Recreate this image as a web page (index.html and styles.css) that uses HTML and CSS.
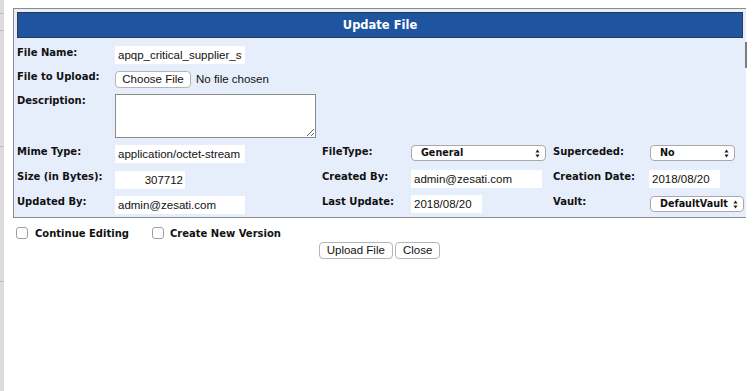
FILE: index.html
```html
<!DOCTYPE html>
<html>
<head>
<meta charset="utf-8">
<title>Update File</title>
<link rel="stylesheet" href="styles.css">
</head>
<body>
<div class="page">
  <div class="edge">
    <div class="edge-line l1"></div>
    <div class="edge-line l2"></div>
    <div class="edge-line l3"></div>
    <div class="edge-line l4"></div>
  </div>
  <div class="dialog">
    <div class="panel">
      <span class="scroll-thumb"></span>
      <div class="title">Update File</div>
      <div class="form">
        <div class="lbl">File Name:</div>
        <div class="val span5"><input class="txt w130" type="text" value="apqp_critical_supplier_status.xlsx"></div>

        <div class="lbl up">File to Upload:</div>
        <div class="val span5 file"><button class="btn choose" type="button">Choose File</button><span class="nofile">No file chosen</span></div>

        <div class="lbl">Description:</div>
        <div class="val span5"><textarea class="desc"></textarea></div>

        <div class="lbl">Mime Type:</div>
        <div class="val"><input class="txt w130" type="text" value="application/octet-stream"></div>
        <div class="lbl">FileType:</div>
        <div class="val"><select class="sel w135 down"><option>General</option></select></div>
        <div class="lbl">Superceded:</div>
        <div class="val"><select class="sel w85 down"><option>No</option></select></div>

        <div class="lbl up">Size (in Bytes):</div>
        <div class="val"><input class="txt w70 right" type="text" value="307712"></div>
        <div class="lbl up">Created By:</div>
        <div class="val"><input class="txt w131 up1" type="text" value="admin@zesati.com"></div>
        <div class="lbl up">Creation Date:</div>
        <div class="val"><input class="txt w71 shift up1" type="text" value="2018/08/20"></div>

        <div class="lbl up">Updated By:</div>
        <div class="val"><input class="txt w130" type="text" value="admin@zesati.com"></div>
        <div class="lbl up">Last Update:</div>
        <div class="val"><input class="txt w71 up1" type="text" value="2018/08/20"></div>
        <div class="lbl up">Vault:</div>
        <div class="val"><select class="sel vault up1"><option>DefaultVault</option></select></div>
      </div>
    </div>
    <div class="options">
      <label class="opt"><input type="checkbox" class="chk"><span>Continue Editing</span></label>
      <label class="opt"><input type="checkbox" class="chk"><span>Create New Version</span></label>
    </div>
    <div class="actions">
      <button class="btn act" type="button">Upload File</button><button class="btn act" type="button">Close</button>
    </div>
  </div>
</div>
</body>
</html>
```

FILE: styles.css
```css
html, body {
  margin: 0;
  padding: 0;
  background: #ffffff;
}

.page {
  display: flex;
  width: 753px;
  height: 391px;
  overflow: hidden;
}

.edge {
  width: 4px;
  flex: 0 0 4px;
  background: #dcdcdc;
  display: flex;
  flex-direction: column;
}

.edge-line {
  height: 1px;
  background: #bdbdbd;
}
.l1 { margin-top: 13px; }
.l2 { margin-top: 16px; }
.l3 { margin-top: 115px; }
.l4 { margin-top: 134px; }

.dialog {
  flex: 1;
  padding: 8px 6px 0 9px;
}

.panel {
  position: relative;
  width: 729px;
  background: #e7eefb;
  border-top: 1px solid #8c8c8c;
  border-left: 1px solid #8c8c8c;
  border-bottom: 1px solid #8c8c8c;
  padding: 3px 0 3px 3px;
}

.scroll-thumb {
  position: absolute;
  right: -1px;
  top: 33px;
  width: 2px;
  height: 26px;
  background: #7d7d7d;
}

.title {
  width: 724px;
  height: 24px;
  background: #1f55a0;
  border: 1px solid #2c3850;
  color: #ffffff;
  font-family: "DejaVu Sans", Verdana, sans-serif;
  font-weight: bold;
  font-size: 11.5px;
  line-height: 24px;
  text-align: center;
}

.form {
  display: grid;
  grid-template-columns: 98px 207px 89px 142px 97px 1fr;
  grid-template-rows: 25px 23px 51px 26px 25px 18px;
  margin-top: 8px;
}

.lbl {
  font-family: "DejaVu Sans", Verdana, sans-serif;
  font-weight: bold;
  font-size: 10px;
  line-height: 12px;
  color: #111111;
  padding-top: 1px;
  white-space: nowrap;
}

.lbl.up {
  padding-top: 0;
}

.val {
  display: flex;
  align-items: flex-start;
}

.span5 {
  grid-column: span 5;
}

.txt {
  box-sizing: border-box;
  height: 18px;
  border: 0;
  outline: none;
  background: #ffffff;
  padding: 0 3px;
  margin: 0;
  font-family: "Liberation Sans", Arial, Helvetica, sans-serif;
  font-size: 11.5px;
  color: #111111;
}

.w130 { width: 130px; }
.w131 { width: 131px; }
.w70 { width: 70px; }
.w71 { width: 71px; }
.right { text-align: right; padding-right: 2px; }
.shift { margin-left: -1px; }
.up1 { margin-top: -1px; }
.down { margin-top: 1px; }

.file {
  align-items: flex-start;
}

.btn {
  box-sizing: border-box;
  background: #ffffff;
  border: 1px solid #b5b5b5;
  border-radius: 4px;
  font-family: "Liberation Sans", Arial, Helvetica, sans-serif;
  font-size: 11.5px;
  color: #111111;
  padding: 0;
  margin: 0;
}

.choose {
  width: 76px;
  height: 17px;
  line-height: 15px;
}

.nofile {
  font-family: "Liberation Sans", Arial, Helvetica, sans-serif;
  font-size: 11.5px;
  line-height: 17px;
  color: #111111;
  margin-left: 5px;
}

.desc {
  box-sizing: border-box;
  width: 201px;
  height: 44px;
  margin: 0;
  border: 1px solid #8a8a8a;
  background: #ffffff;
  resize: both;
}

.sel {
  -webkit-appearance: none;
  appearance: none;
  box-sizing: border-box;
  height: 16px;
  margin: 0;
  border: 1px solid #a9a9a9;
  border-radius: 4px;
  background-color: #ffffff;
  background-image: url("data:image/svg+xml;utf8,<svg xmlns='http://www.w3.org/2000/svg' width='5' height='9' viewBox='0 0 5 9'><path d='M2.5 0.5 L4.6 3.4 L0.4 3.4 Z M2.5 8.5 L4.6 5.6 L0.4 5.6 Z' fill='%23222'/></svg>");
  background-repeat: no-repeat;
  background-position: right 5px center;
  font-family: "DejaVu Sans", Verdana, sans-serif;
  font-weight: bold;
  font-size: 9.6px;
  line-height: 14px;
  color: #111111;
  padding: 0 13px 0 9px;
}

.w135 { width: 135px; }
.w85 { width: 85px; }
.vault { width: 94px; padding-left: 9px; padding-right: 12px; }

.options {
  display: flex;
  align-items: center;
  margin-top: 9px;
  height: 12px;
}

.opt {
  display: flex;
  align-items: center;
  font-family: "DejaVu Sans", Verdana, sans-serif;
  font-weight: bold;
  font-size: 10px;
  color: #111111;
  margin-left: 3px;
}

.opt + .opt {
  margin-left: 23px;
}

.chk {
  -webkit-appearance: none;
  appearance: none;
  box-sizing: border-box;
  width: 12px;
  height: 12px;
  margin: 0 7px 0 0;
  border: 1px solid #a0a0a0;
  border-radius: 3px;
  background: #ffffff;
}

.opt + .opt .chk {
  margin-right: 6px;
}

.actions {
  display: flex;
  justify-content: center;
  margin-top: 3px;
  width: 733px;
}

.act {
  height: 17px;
  line-height: 15px;
  padding: 0 7px;
  margin: 0 1px;
}
```
